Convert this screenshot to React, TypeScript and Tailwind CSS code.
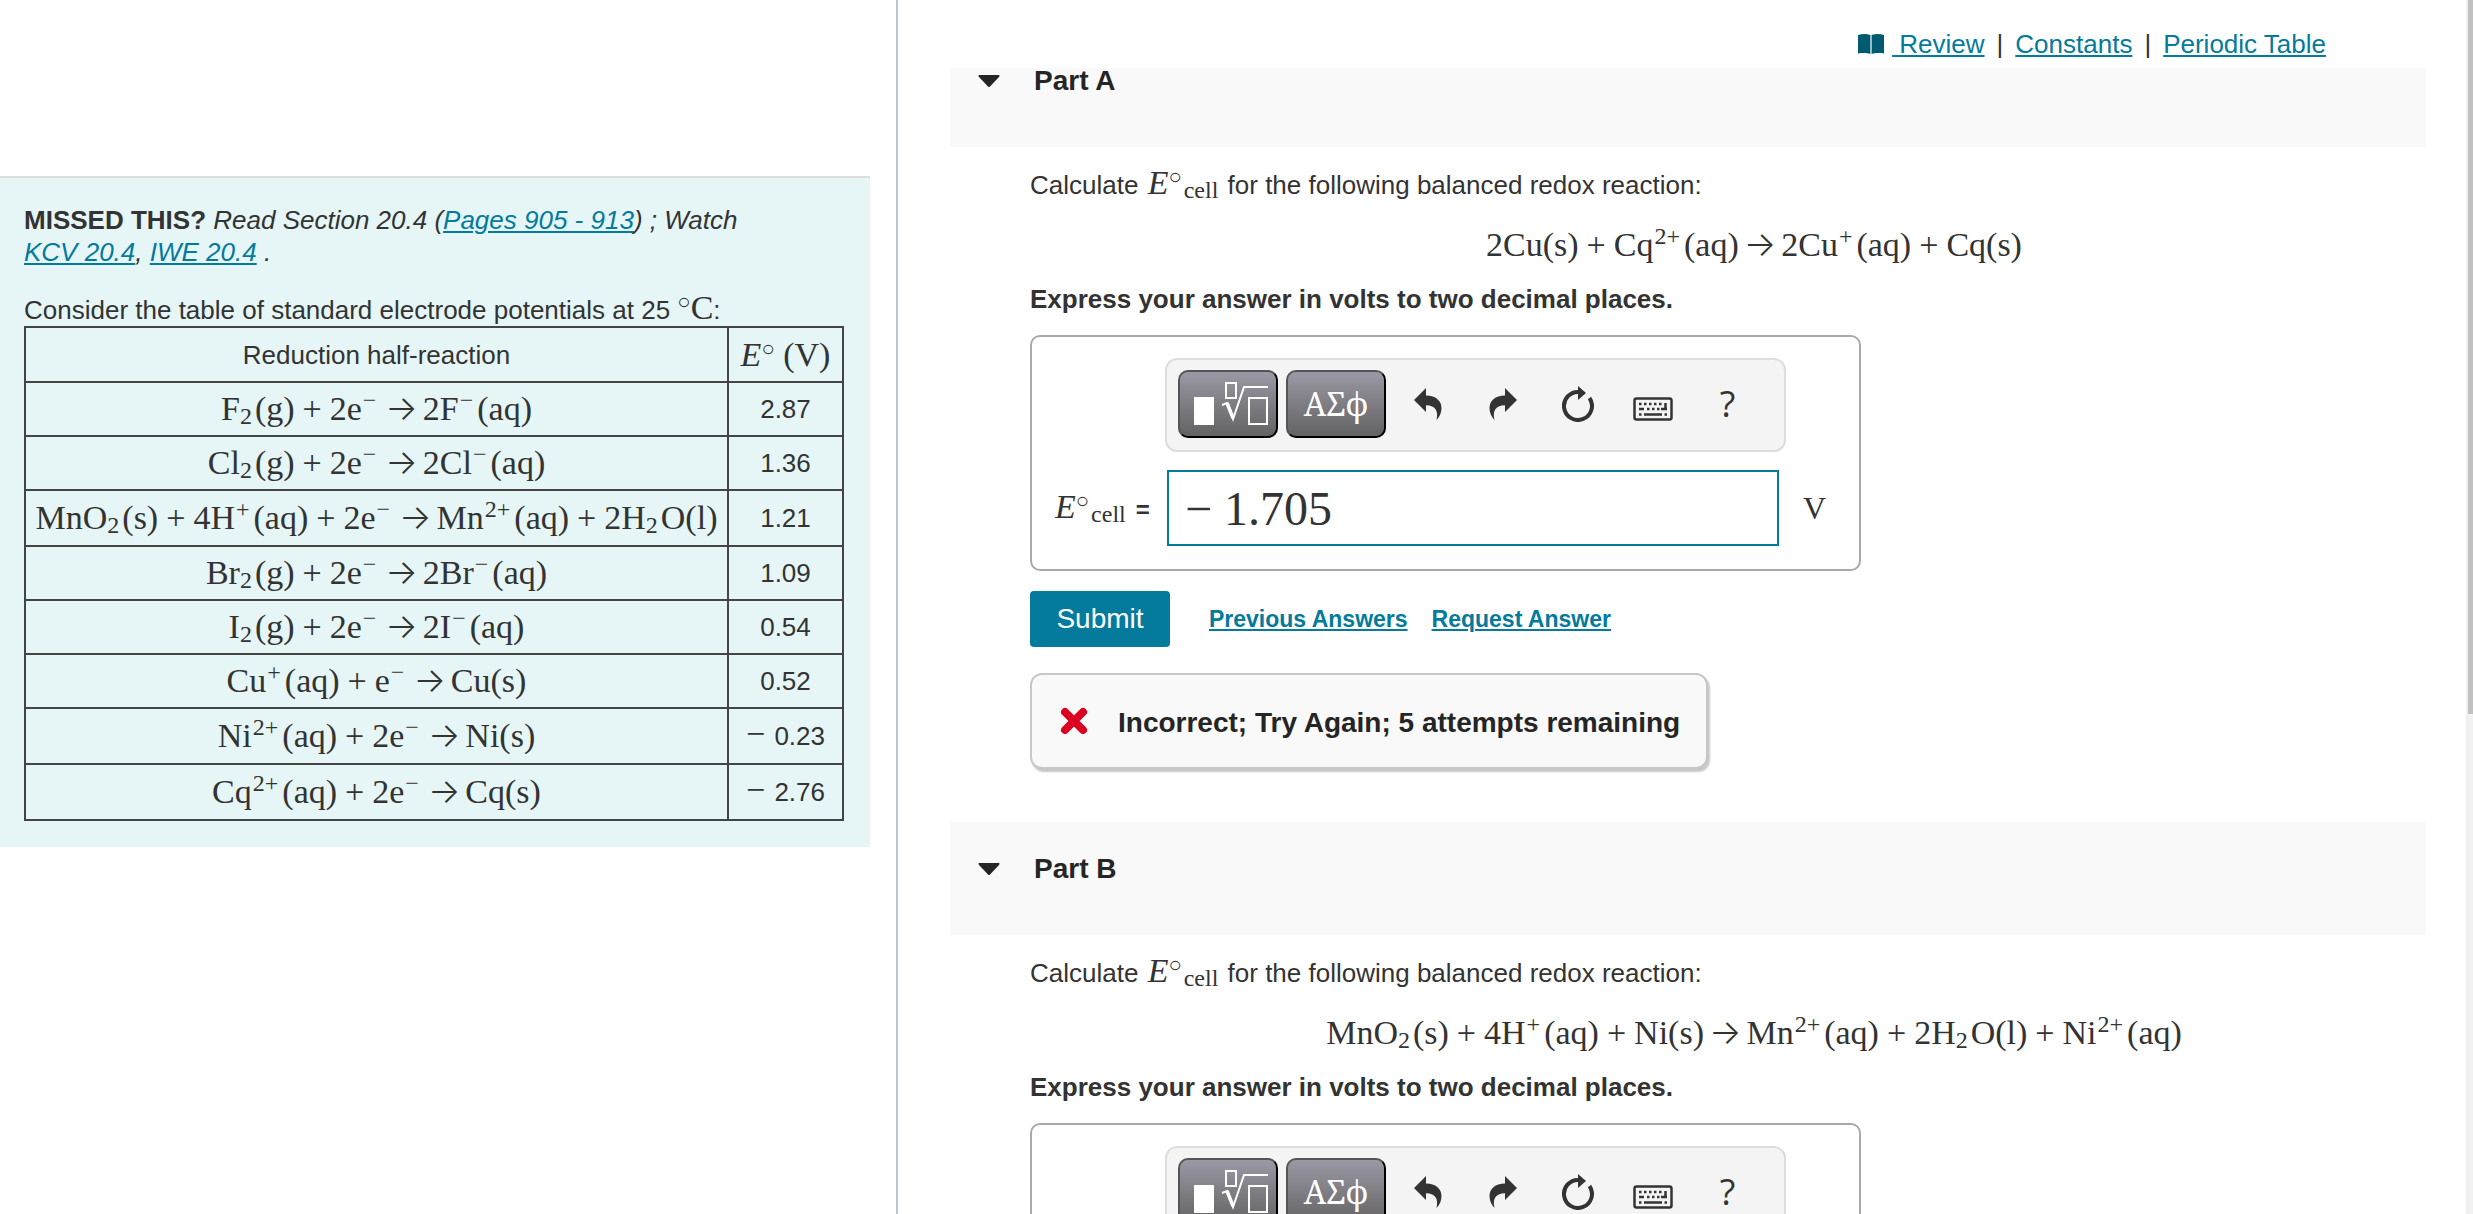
import type { ReactNode } from "react";

const ROWS = [
  { reaction: "F_2(g) + 2e^- > 2F^-(aq)", potential: "2.87" },
  { reaction: "Cl_2(g) + 2e^- > 2Cl^-(aq)", potential: "1.36" },
  {
    reaction: "MnO_2(s) + 4H^+(aq) + 2e^- > Mn^2+(aq) + 2H_2O(l)",
    potential: "1.21",
    tall: true,
  },
  { reaction: "Br_2(g) + 2e^- > 2Br^-(aq)", potential: "1.09" },
  { reaction: "I_2(g) + 2e^- > 2I^-(aq)", potential: "0.54" },
  { reaction: "Cu^+(aq) + e^- > Cu(s)", potential: "0.52" },
  { reaction: "Ni^2+(aq) + 2e^- > Ni(s)", potential: "-0.23", tall: true },
  { reaction: "Cq^2+(aq) + 2e^- > Cq(s)", potential: "-2.76", tall: true },
];

// "_2" is a subscript, "^2+" a superscript, " + " and " > " are operators
function Formula({ children }: { children: string }) {
  const tokens = children.match(/ \+ | > |_\d|\^\d?[+-]|[^_^ ]+/g) || [];

  return (
    <span className="inline-block h-9 font-['Liberation_Serif',serif] text-[34px] leading-9 whitespace-nowrap">
      {tokens.map((token, i) => {
        if (token === " + ") {
          return (
            <span key={i} className="mx-2">
              +
            </span>
          );
        }
        if (token === " > ") {
          return (
            <span
              key={i}
              className="mx-[5px] font-['Inter',sans-serif] text-[34px] leading-0 font-light"
            >
              →
            </span>
          );
        }
        if (token[0] === "_") {
          return (
            <sub
              key={i}
              className="static mr-[3px] align-[-4px] text-2xl leading-0"
            >
              {token.slice(1)}
            </sub>
          );
        }
        if (token[0] === "^") {
          return (
            <sup
              key={i}
              className="static mr-1 ml-px align-[12px] text-2xl leading-0"
            >
              {token.slice(1).replace("-", "−")}
            </sup>
          );
        }
        return <span key={i}>{token}</span>;
      })}
    </span>
  );
}

function Degree() {
  return <sup className="static align-[10px] text-[22px] leading-0">○</sup>;
}

function CellPotential() {
  return (
    <span className="mx-0.5 font-['Liberation_Serif',serif] text-[34px] leading-8">
      <i>E</i>
      <Degree />
      <sub className="static ml-0.5 align-[-4px] text-2xl leading-0">cell</sub>
    </span>
  );
}

function Potential({ value }: { value: string }) {
  if (value[0] !== "-") return value;

  return (
    <>
      <span className="mr-0.5 font-['Liberation_Serif',serif] text-[34px] leading-0">
        −
      </span>{" "}
      {value.slice(1)}
    </>
  );
}

function Link({ children }: { children: ReactNode }) {
  return (
    <a
      href="#"
      className="text-[#047a9c] underline decoration-2 underline-offset-2"
    >
      {children}
    </a>
  );
}

function BookIcon() {
  return (
    <svg viewBox="0 0 26 20" className="h-5 w-[26px]" fill="#005a70">
      <path d="M0 1C4 -0.300 9 -0.300 12.400 1V20C9 18.800 4 18.800 0 19.500ZM26 1C22 -0.300 17 -0.300 13.600 1V20C17 18.800 22 18.800 26 19.500Z" />
    </svg>
  );
}

function TemplateIcon() {
  return (
    <svg viewBox="-3 0 80 44" className="h-11 w-20" fill="none" stroke="#fff">
      <rect x="3" y="15" width="20" height="28" fill="#fff" stroke="none" />
      <rect x="35" y="1" width="10" height="15" strokeWidth="2" />
      <rect x="58" y="16" width="18" height="26" strokeWidth="2" />
      <path d="M31 23L36 21L42 37L53 5H77" strokeWidth="2" />
      <path d="M36 21L42 36" strokeWidth="3.5" />
    </svg>
  );
}

function UndoIcon({ flip }: { flip?: boolean }) {
  return (
    <svg
      viewBox="0 0 28 32"
      className={flip ? "h-8 w-7 -scale-x-100" : "h-8 w-7"}
      fill="#333"
    >
      <path d="M0 12L12 0V7.5C22 7.5 27.500 13 27.500 20C27.500 25 25.500 29 22.500 32C24.500 23 22 17.500 12 17.200V24Z" />
    </svg>
  );
}

function ResetIcon() {
  return (
    <svg viewBox="0 0 32 36" className="h-9 w-8">
      <path
        d="M17 6A14 14 0 1 0 27.500 12"
        fill="none"
        stroke="#333"
        strokeWidth="4"
      />
      <path d="M16 0L24 7L16 14Z" fill="#333" />
    </svg>
  );
}

function KeyboardIcon() {
  return (
    <svg viewBox="0 0 40 24" className="mt-[10px] h-6 w-10">
      <rect
        x="1.500"
        y="1.500"
        width="37"
        height="21"
        rx="2"
        fill="none"
        stroke="#333"
        strokeWidth="2.500"
      />
      <g stroke="#333" strokeWidth="2.500">
        <path d="M6 7H29" strokeDasharray="2.500 2.500" />
        <path d="M6 12H11M14 12H16.500M19 12H21.500M24 12H26.500M28 12H34M32.500 6V13" />
        <path d="M6 17.500H8.500M11 17.500H29M31.500 17.500H34" />
      </g>
    </svg>
  );
}

const toolButton =
  "flex h-[68px] w-[100px] items-center justify-center rounded-[10px] border-2 border-t-[#555] border-r-black border-b-black border-l-[#555] bg-linear-to-b from-[#9b99a5] to-[#636363] text-white";
const iconButton = "flex h-[68px] w-[75px] items-center justify-center";

function AnswerBox({ id, defaultValue }: { id: string; defaultValue: string }) {
  return (
    <div className="mt-5 w-[831px] rounded-[10px] border-2 border-[#a9a9a9] bg-white pt-[21px] pb-[23px]">
      <div className="ml-[133px] flex h-[94px] w-[621px] items-center rounded-xl border-2 border-[#ddd] bg-[#f4f4f4] pb-0.5 pl-[11px]">
        <button aria-label="Templates" className={toolButton}>
          <TemplateIcon />
        </button>
        <button
          className={`${toolButton} ml-2 font-['Noto_Serif','DejaVu_Serif',serif] text-[32px]`}
        >
          ΑΣϕ
        </button>
        <div className="ml-1 flex">
          <button aria-label="Undo" className={iconButton}>
            <UndoIcon />
          </button>
          <button aria-label="Redo" className={iconButton}>
            <UndoIcon flip />
          </button>
          <button aria-label="Reset" className={iconButton}>
            <ResetIcon />
          </button>
          <button aria-label="Keyboard shortcuts" className={iconButton}>
            <KeyboardIcon />
          </button>
          <button
            className={`${iconButton} font-['Open_Sans',sans-serif] text-4xl text-[#333]`}
          >
            ?
          </button>
        </div>
      </div>
      <div className="mt-[18px] flex items-center">
        <label htmlFor={id} className="w-[135px] pl-[21px] whitespace-nowrap">
          <CellPotential />
          <span className="ml-2 text-2xl font-bold">=</span>
        </label>
        <input
          id={id}
          defaultValue={defaultValue}
          className="h-[76px] w-[612px] border-2 border-[#047a9c] bg-white px-4 font-['Liberation_Serif',serif] text-5xl text-[#333] outline-none"
        />
        <span className="ml-6 font-['Liberation_Serif',serif] text-[32px]">
          V
        </span>
      </div>
    </div>
  );
}

interface PartProps {
  name: string;
  formula: string;
  answer: string;
}

function Part({ name, formula, answer }: PartProps) {
  return (
    <section>
      <header className="h-[113px] bg-[#f9f9f9] pt-[35px] pl-7">
        <button className="flex items-center text-[28px] leading-6 font-bold text-[#252525]">
          <svg viewBox="0 0 22 12" className="h-3 w-[22px]" fill="#252525">
            <path d="M1 0H21Q22 0.500 21 2L12 11.500Q11 12.500 10 11.500L1 2Q0 0.500 1 0Z" />
          </svg>
          <span className="ml-[34px]">{name}</span>
        </button>
      </header>
      <div className="pt-5 pb-[53px] pl-20">
        <p className="h-8 leading-8">
          Calculate <CellPotential /> for the following balanced redox reaction:
        </p>
        <div className="mt-7 h-9 pl-[52px] text-center">
          <Formula>{formula}</Formula>
        </div>
        <p className="mt-5 leading-8 font-bold">
          Express your answer in volts to two decimal places.
        </p>
        <AnswerBox id={`answer-${name}`} defaultValue={answer} />
        <div className="mt-5 flex items-center">
          <button className="h-14 w-[140px] rounded bg-[#047a9c] text-[28px] text-white">
            Submit
          </button>
          <div className="ml-[39px] flex gap-6 text-[23px] font-bold">
            <Link>Previous Answers</Link>
            <Link>Request Answer</Link>
          </div>
        </div>
        <div className="mt-[26px] flex h-24 w-[678px] items-center rounded-xl border-2 border-[#c7c7c7] bg-[#f9f9f9] pl-7 text-[28px] font-bold text-[#252525] shadow-[2px_3px_2px_#c7c7c7]">
          <svg
            viewBox="0 0 28 28"
            className="mr-[30px] h-7 w-7"
            stroke="#db0020"
            strokeWidth="8"
            strokeLinecap="round"
          >
            <path d="M5 5L23 23M23 5L5 23" />
          </svg>
          <span className="pt-1">
            Incorrect; Try Again; 5 attempts remaining
          </span>
        </div>
      </div>
    </section>
  );
}

export default function App() {
  return (
    <div className="flex h-screen overflow-hidden bg-white font-['Liberation_Sans',Arial,sans-serif] text-[26px] leading-8 text-[#333]">
      <aside className="w-[898px] shrink-0 border-r-2 border-[#b8c7d3] pt-[176px] pr-[26px]">
        <div className="border-t-2 border-[#ddd] bg-[#e6f6f7] pt-[26px] pr-[26px] pb-[26px] pl-6">
          <p>
            <b>MISSED THIS?</b>{" "}
            <i>
              Read Section 20.4 (<Link>Pages 905 - 913</Link>) ; Watch
              <br />
              <Link>KCV 20.4</Link>, <Link>IWE 20.4</Link> .
            </i>
          </p>
          <p className="mt-6 h-[34px] whitespace-nowrap">
            Consider the table of standard electrode potentials at 25{" "}
            <span className="font-['Liberation_Serif',serif] text-[34px] leading-8">
              <Degree />C
            </span>
            :
          </p>
          <table className="w-full border-collapse text-center [&_td]:border-2 [&_td]:border-[#444] [&_th]:border-2 [&_th]:border-[#444]">
            <thead>
              <tr className="h-[55px]">
                <th className="font-normal">Reduction half-reaction</th>
                <th className="w-[115px] font-['Liberation_Serif',serif] text-[34px] font-normal">
                  <i>E</i>
                  <Degree /> (V)
                </th>
              </tr>
            </thead>
            <tbody>
              {ROWS.map((row) => (
                <tr
                  key={row.reaction}
                  className={row.tall ? "h-14" : "h-[54px]"}
                >
                  <td>
                    <Formula>{row.reaction}</Formula>
                  </td>
                  <td>
                    <Potential value={row.potential} />
                  </td>
                </tr>
              ))}
            </tbody>
          </table>
        </div>
      </aside>

      <main className="flex min-w-0 grow flex-col pr-10 pl-[52px]">
        <nav className="flex h-[68px] shrink-0 items-center justify-end pt-5 pr-[100px]">
          <BookIcon />
          <span className="ml-2 whitespace-pre">
            <Link>{" Review"}</Link>
          </span>
          <span className="mx-3">|</span>
          <Link>Constants</Link>
          <span className="mx-3">|</span>
          <Link>Periodic Table</Link>
        </nav>
        <div className="grow overflow-hidden">
          <div className="-mt-[34px]">
            <Part
              name="Part A"
              formula="2Cu(s) + Cq^2+(aq) > 2Cu^+(aq) + Cq(s)"
              answer="− 1.705"
            />
            <Part
              name="Part B"
              formula="MnO_2(s) + 4H^+(aq) + Ni(s) > Mn^2+(aq) + 2H_2O(l) + Ni^2+(aq)"
              answer=""
            />
          </div>
        </div>
      </main>

      <div className="w-[7px] shrink-0 border-l-2 border-[#f0f0f0] bg-[#f1f1f1]">
        <div className="h-[714px] bg-[#c1c1c1]" />
      </div>
    </div>
  );
}
